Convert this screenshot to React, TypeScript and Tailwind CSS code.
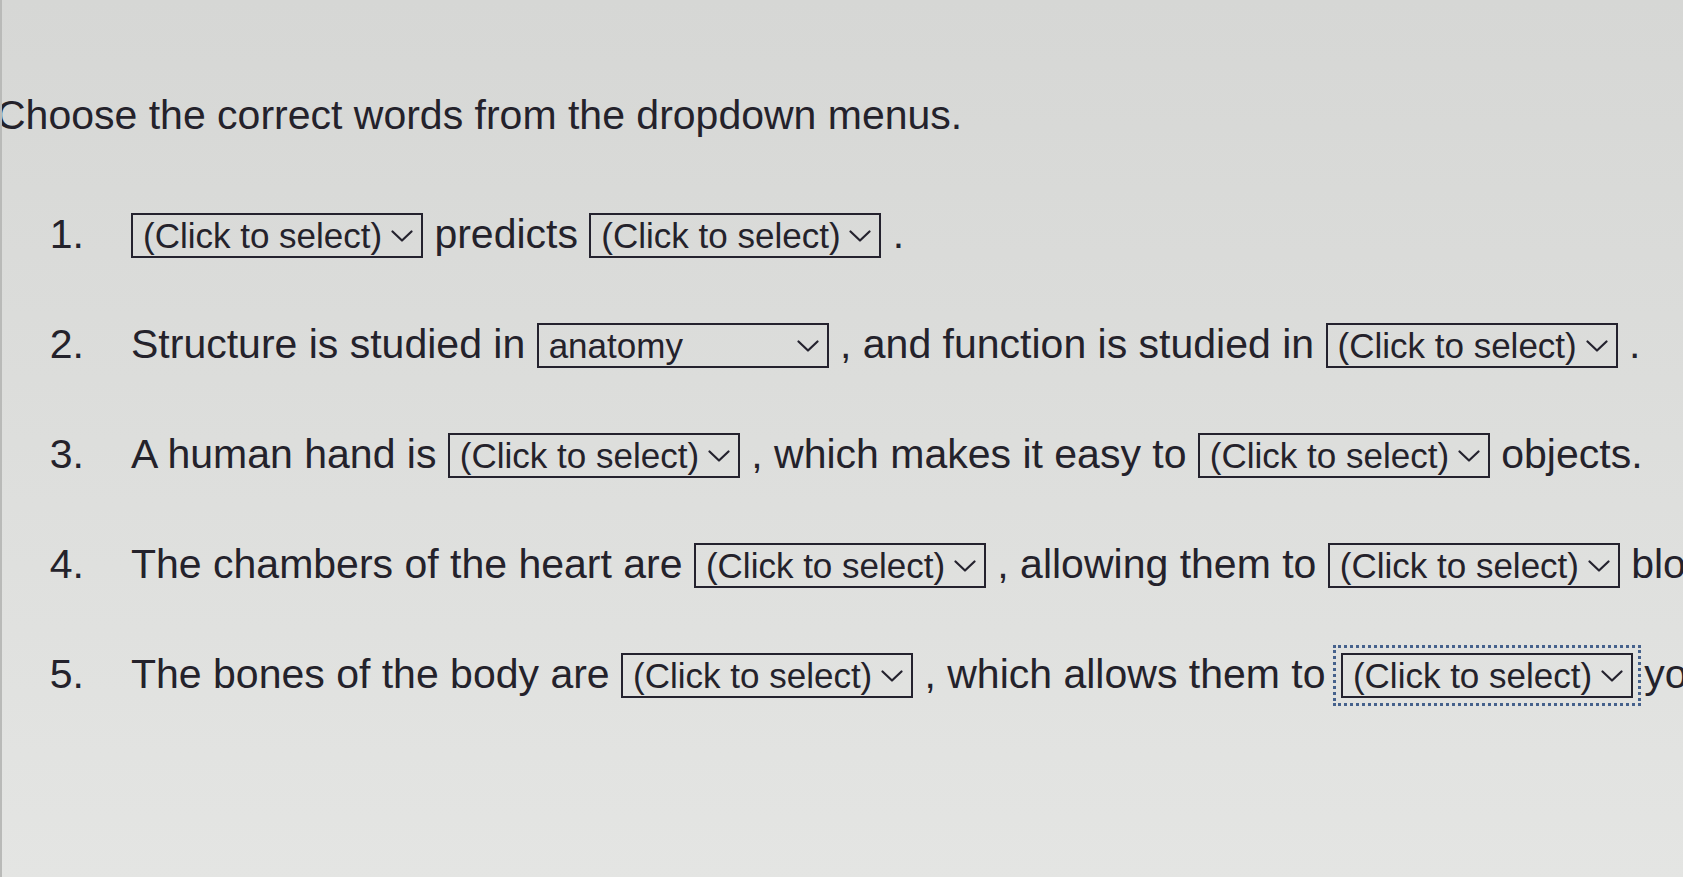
import React from 'react';

interface DropdownProps {
    value?: string;
    focused?: boolean;
}

const Chevron: React.FC = () => (
    <svg width="22" height="12" viewBox="0 0 22 12" fill="none" className="shrink-0">
        <path d="M1.5 1.5 L11 10.5 L20.5 1.5" stroke="#24222e" strokeWidth="2.2" strokeLinecap="round" strokeLinejoin="round" />
    </svg>
);

const Dropdown: React.FC<DropdownProps> = ({ value = '(Click to select)', focused = false }) => {
    return (
        <button
            type="button"
            className={
                focused
                    ? 'inline-flex h-[45px] w-[292px] items-center justify-between border-2 border-[#24222e] pl-[10px] pr-[8px] text-[35px] leading-none outline-[3px] outline-dotted outline-offset-[5px] outline-[#45618c]'
                    : 'inline-flex h-[45px] w-[292px] items-center justify-between border-2 border-[#24222e] pl-[10px] pr-[8px] text-[35px] leading-none'
            }
        >
            <span>{value}</span>
            <Chevron />
        </button>
    );
};

const Row: React.FC<{ num: number; children: React.ReactNode }> = ({ num, children }) => (
    <li className="flex h-[110px] items-center">
        <span className="w-[82px] shrink-0 text-right">{num}.</span>
        <span className="ml-[47px] whitespace-nowrap">{children}</span>
    </li>
);

export default function App() {
    return (
        <div className="min-h-screen w-full overflow-hidden border-l-2 border-[#b9bab8] bg-linear-to-b from-[#d6d7d5] to-[#e4e5e3] font-['Liberation_Sans',Arial,sans-serif] text-[41px] leading-[48px] text-[#24222b]">
            <h1 className="ml-[-6px] pt-[91px] font-normal">Choose the correct words from the dropdown menus.</h1>

            <ol className="mt-[40px]">
                <Row num={1}>
                    <Dropdown /> predicts <Dropdown /> .
                </Row>
                <Row num={2}>
                    Structure is studied in <Dropdown value="anatomy" /> , and function is studied in <Dropdown /> .
                </Row>
                <Row num={3}>
                    A human hand is <Dropdown /> , which makes it easy to <Dropdown /> objects.
                </Row>
                <Row num={4}>
                    The chambers of the heart are <Dropdown /> , allowing them to <Dropdown /> blood
                </Row>
                <Row num={5}>
                    The bones of the body are <Dropdown /> , which allows them to{' '}
                    <span className="ml-[4px]">
                        <Dropdown focused />
                    </span>{' '}
                    your
                </Row>
            </ol>
        </div>
    );
}
